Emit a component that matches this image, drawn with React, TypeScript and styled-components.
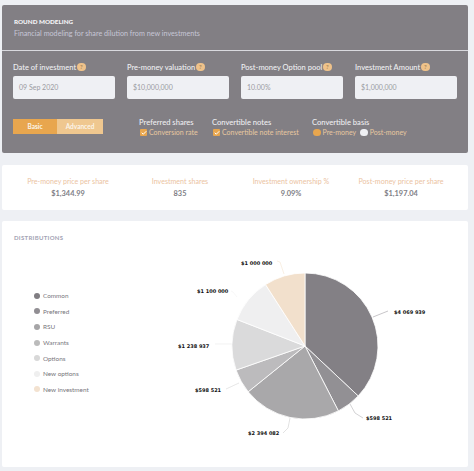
import React from "react";
import styled, { createGlobalStyle } from "styled-components";
import { Check } from "lucide-react";

const GlobalStyle = createGlobalStyle`
  html, body {
    margin: 0;
    padding: 0;
    background: #eef0f4;
    font-family: "Lato", "Noto Sans", sans-serif;
  }
`;

const Page = styled.div`
  width: 474px;
  height: 471px;
  padding: 5px 6px 4px 2px;
  box-sizing: border-box;
  display: flex;
  flex-direction: column;
  overflow: hidden;
`;

const Panel = styled.section`
  height: 148px;
  background: #827f84;
  border-radius: 2px;
  display: flex;
  flex-direction: column;
`;

const PanelHeader = styled.header`
  height: 46px;
  padding: 12px 12px 0;
  box-sizing: border-box;
  border-bottom: 1px solid #d9d9de;
`;

const PanelTitle = styled.h1`
  margin: 0;
  font-size: 6.3px;
  line-height: 10px;
  font-weight: 900;
  color: #f5f5f7;
`;

const PanelSubtitle = styled.p`
  margin: 2px 0 0;
  font-size: 7.2px;
  line-height: 10px;
  color: #c6c6d6;
`;

const Fields = styled.div`
  display: flex;
  gap: 12px;
  padding: 11px 11px 0;
`;

const Field = styled.div`
  width: 102px;
`;

const FieldLabel = styled.label`
  display: flex;
  align-items: center;
  gap: 1px;
  height: 10px;
  margin-bottom: 4px;
  font-size: 7.5px;
  font-weight: 500;
  color: #efeff2;
  white-space: nowrap;
`;

const HelpBadge = styled.span`
  width: 8.5px;
  height: 8.5px;
  border-radius: 50%;
  background: #efc28a;
  color: #9a7a50;
  font-size: 6px;
  line-height: 8.5px;
  text-align: center;
  flex: none;
`;

const Input = styled.div`
  height: 23px;
  padding: 0 6px;
  background: #eff0f4;
  border-radius: 2px;
  font-size: 7px;
  line-height: 23px;
  color: #9b9ba2;
`;

const Controls = styled.div`
  display: flex;
  align-items: flex-start;
  padding: 16px 11px 0;
`;

const Toggle = styled.div`
  display: flex;
  width: 90px;
  height: 15px;
  margin: 4px 36px 0 0;
`;

const ToggleButton = styled.div<{ $active?: boolean }>`
  flex: ${(p) => (p.$active ? "0 0 44px" : "1")};
  background: ${(p) => (p.$active ? "#e8a64e" : "#efc78f")};
  color: #fbf4e8;
  font-size: 6.5px;
  font-weight: 700;
  line-height: 15px;
  text-align: center;
`;

const Group = styled.div<{ $width: number }>`
  width: ${(p) => p.$width}px;
  padding-top: 2px;
`;

const GroupTitle = styled.div`
  font-size: 7.6px;
  font-weight: 500;
  line-height: 10px;
  color: #ededf0;
  white-space: nowrap;
`;

const Options = styled.div`
  display: flex;
  gap: 3px;
  margin-top: 1px;
  white-space: nowrap;
`;

const Option = styled.span`
  display: flex;
  align-items: center;
  gap: 2px;
  font-size: 7px;
  line-height: 9px;
  color: #e8c8a0;
`;

const Tick = styled.span`
  width: 7px;
  height: 7px;
  margin-left: 1px;
  border-radius: 1px;
  background: #e8a64e;
  color: #fff;
  display: flex;
  align-items: center;
  justify-content: center;
`;

const Radio = styled.span<{ $on?: boolean }>`
  width: 7.5px;
  height: 7.5px;
  margin-left: 1px;
  border-radius: 50%;
  background: ${(p) => (p.$on ? "#e8a64e" : "#eff0f4")};
`;

const Stats = styled.section`
  height: 45px;
  margin-top: 12px;
  background: #fff;
  border-radius: 2px;
  display: grid;
  grid-template-columns: 132px 92px 130px 90px;
  padding-top: 12px;
  box-sizing: border-box;
`;

const Stat = styled.div`
  text-align: center;
`;

const StatLabel = styled.div`
  font-size: 7.1px;
  line-height: 10px;
  color: #ebc3a2;
  white-space: nowrap;
`;

const StatValue = styled.div`
  margin-top: 1px;
  font-size: 7.4px;
  font-weight: 700;
  line-height: 11px;
  color: #808086;
`;

const DistributionCard = styled.section`
  flex: 1;
  margin-top: 11px;
  background: #fff;
  border-radius: 2px;
  display: flex;
  flex-direction: column;
`;

const CardTitle = styled.h2`
  margin: 0;
  padding: 12px 12px 0;
  height: 29px;
  box-sizing: border-box;
  font-size: 6px;
  line-height: 9px;
  font-weight: 700;
  letter-spacing: 0.3px;
  color: #a3a3b4;
`;

const CardBody = styled.div`
  flex: 1;
  display: flex;
  align-items: flex-start;
`;

const Legend = styled.ul`
  list-style: none;
  width: 168px;
  margin: 0;
  padding: 38px 0 0 32px;
  box-sizing: border-box;
`;

const LegendItem = styled.li`
  display: flex;
  align-items: center;
  gap: 3px;
  height: 15.6px;
  font-size: 6.4px;
  color: #77767c;
  white-space: nowrap;
`;

const LegendDot = styled.span<{ $color: string }>`
  width: 6px;
  height: 6px;
  border-radius: 50%;
  background: ${(p) => p.$color};
`;

const PieSvg = styled.svg`
  flex: none;
  display: block;
`;

const PieLabel = styled.text`
  font-family: "DejaVu Sans", sans-serif;
  font-size: 5px;
  font-weight: 700;
  fill: #111;
`;

const fields = [
  { label: "Date of investment", value: "09 Sep 2020" },
  { label: "Pre-money valuation", value: "$10,000,000" },
  { label: "Post-money Option pool", value: "10.00%" },
  { label: "Investment Amount", value: "$1,000,000" },
];

const stats = [
  { label: "Pre-money price per share", value: "$1,344.99" },
  { label: "Investment shares", value: "835" },
  { label: "Investment ownership %", value: "9.09%" },
  { label: "Post-money price per share", value: "$1,197.04" },
];

const slices = [
  { name: "Common", value: 4069939, color: "#838085", dot: "#807d82" },
  { name: "Preferred", value: 598521, color: "#929094", dot: "#918e93" },
  { name: "RSU", value: 2394082, color: "#a9a8aa", dot: "#a6a5a7" },
  { name: "Warrants", value: 598521, color: "#bcbbbd", dot: "#bbbbbb" },
  { name: "Options", value: 1238937, color: "#dadadb", dot: "#d8d8d8" },
  { name: "New options", value: 1100000, color: "#efeff0", dot: "#efefef" },
  { name: "New investment", value: 1000000, color: "#f2e0cc", dot: "#f3e2d0" },
];

// leader lines and labels, in the chart's own coordinates
const callouts = [
  { text: "$4 069 939", x: 224, y: 64, line: "203,67 218,61", color: "#b0aeb2" },
  { text: "$598 521", x: 196, y: 170, line: "180,154 185,163 193,168", color: "#c0bfc2" },
  { text: "$2 394 082", x: 78, y: 185, line: "120,168 118,178 113,183", color: "#d5d5d6" },
  { text: "$598 521", x: 25, y: 142, line: "69,133 56,139", color: "#dddddd" },
  { text: "$1 238 937", x: 8, y: 98, line: "62,94 45,94", color: "#ececec" },
  { text: "$1 100 000", x: 27, y: 43, line: "67,47 63,42 61,41", color: "#f4f4f4" },
  { text: "$1 000 000", x: 71, y: 15, line: "114,24 110,12 107,11", color: "#f6ead9" },
];

const CX = 135;
const CY = 96;
const R = 73;

function polar(angle: number) {
  const rad = (angle * Math.PI) / 180;
  return `${CX + R * Math.sin(rad)} ${CY - R * Math.cos(rad)}`;
}

function Pie() {
  const total = slices.reduce((sum, s) => sum + s.value, 0);
  let angle = 0;
  return (
    <PieSvg width={298} height={217} viewBox="0 0 298 217">
      {callouts.map((c) => (
        <polyline key={c.line} points={c.line} fill="none" stroke={c.color} strokeWidth={0.7} />
      ))}
      {slices.map((s) => {
        const start = angle;
        angle += (s.value / total) * 360;
        const large = angle - start > 180 ? 1 : 0;
        return (
          <path
            key={s.name}
            d={`M${CX} ${CY} L${polar(start)} A${R} ${R} 0 ${large} 1 ${polar(angle)} Z`}
            fill={s.color}
            stroke="#fff"
            strokeWidth={0.8}
          />
        );
      })}
      {callouts.map((c) => (
        <PieLabel key={c.line} x={c.x} y={c.y}>
          {c.text}
        </PieLabel>
      ))}
    </PieSvg>
  );
}

export default function App() {
  return (
    <Page>
      <GlobalStyle />
      <Panel>
        <PanelHeader>
          <PanelTitle>ROUND MODELING</PanelTitle>
          <PanelSubtitle>Financial modeling for share dilution from new investments</PanelSubtitle>
        </PanelHeader>
        <Fields>
          {fields.map((f) => (
            <Field key={f.label}>
              <FieldLabel>
                {f.label} <HelpBadge>?</HelpBadge>
              </FieldLabel>
              <Input>{f.value}</Input>
            </Field>
          ))}
        </Fields>
        <Controls>
          <Toggle>
            <ToggleButton $active>Basic</ToggleButton>
            <ToggleButton>Advanced</ToggleButton>
          </Toggle>
          <Group $width={73}>
            <GroupTitle>Preferred shares</GroupTitle>
            <Options>
              <Option>
                <Tick>
                  <Check size={6} strokeWidth={4} />
                </Tick>
                Conversion rate
              </Option>
            </Options>
          </Group>
          <Group $width={100}>
            <GroupTitle>Convertible notes</GroupTitle>
            <Options>
              <Option>
                <Tick>
                  <Check size={6} strokeWidth={4} />
                </Tick>
                Convertible note interest
              </Option>
            </Options>
          </Group>
          <Group $width={100}>
            <GroupTitle>Convertible basis</GroupTitle>
            <Options>
              <Option>
                <Radio $on />
                Pre-money
              </Option>
              <Option>
                <Radio />
                Post-money
              </Option>
            </Options>
          </Group>
        </Controls>
      </Panel>
      <Stats>
        {stats.map((s) => (
          <Stat key={s.label}>
            <StatLabel>{s.label}</StatLabel>
            <StatValue>{s.value}</StatValue>
          </Stat>
        ))}
      </Stats>
      <DistributionCard>
        <CardTitle>DISTRIBUTIONS</CardTitle>
        <CardBody>
          <Legend>
            {slices.map((s) => (
              <LegendItem key={s.name}>
                <LegendDot $color={s.dot} />
                {s.name}
              </LegendItem>
            ))}
          </Legend>
          <Pie />
        </CardBody>
      </DistributionCard>
    </Page>
  );
}
